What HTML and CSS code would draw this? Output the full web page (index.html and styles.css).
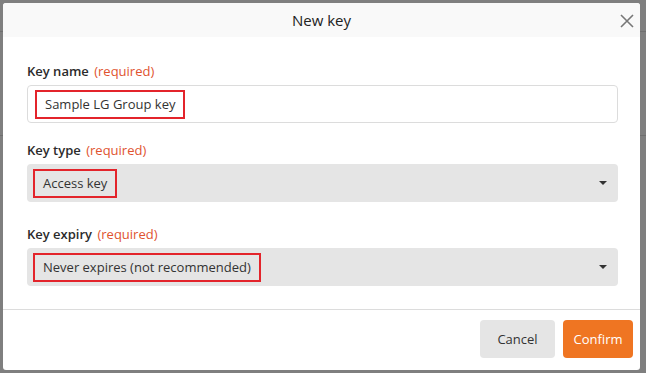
FILE: index.html
```html
<!DOCTYPE html>
<html lang="en">
<head>
  <meta charset="UTF-8">
  <title>New key</title>
  <link rel="stylesheet" href="styles.css">
</head>
<body>
  <div class="dialog">
    <!-- Header -->
    <div class="dialog-header">
      <div class="dialog-title">New key</div>
      <button class="close-btn" aria-label="Close">
        <svg width="14" height="14" viewBox="0 0 14 14">
          <path d="M1 1 L13 13 M13 1 L1 13" stroke="#777" stroke-width="1.6" fill="none"/>
        </svg>
      </button>
    </div>

    <!-- Form -->
    <div class="dialog-body">
      <div class="field field-name">
        <div class="label">Key name <span class="req">(required)</span></div>
        <div class="text-input">
          <span class="mark">Sample LG Group key</span>
        </div>
      </div>

      <div class="field field-type">
        <div class="label">Key type <span class="req">(required)</span></div>
        <div class="select">
          <span class="mark">Access key</span>
          <span class="caret"></span>
        </div>
      </div>

      <div class="field">
        <div class="label">Key expiry <span class="req">(required)</span></div>
        <div class="select">
          <span class="mark">Never expires (not recommended)</span>
          <span class="caret"></span>
        </div>
      </div>
    </div>

    <!-- Footer -->
    <div class="dialog-footer">
      <button class="btn btn-cancel">Cancel</button>
      <button class="btn btn-confirm">Confirm</button>
    </div>
  </div>
</body>
</html>
```

FILE: styles.css
```css
body {
  margin: 0;
  padding: 3px;
  width: 646px;
  height: 373px;
  box-sizing: border-box;
  font-family: "Open Sans", Arial, sans-serif;
  font-size: 13px;
  color: #333;
  background: #7f7f7f;
  background-image:
    linear-gradient(#6f6f6f, #6f6f6f),
    linear-gradient(#6f6f6f, #6f6f6f);
  background-size: 100% 1px, 100% 1px;
  background-position: 0 31px, 0 135px;
  background-repeat: no-repeat;
  overflow: hidden;
}

.dialog {
  width: 637px;
  height: 367px;
  background: #fff;
  border-radius: 3px;
  display: flex;
  flex-direction: column;
  overflow: hidden;
}

.dialog-header {
  height: 34px;
  background: #f9f9f9;
  display: flex;
  align-items: center;
  justify-content: center;
  position: relative;
}

.dialog-title {
  font-size: 15px;
  color: #222;
}

.close-btn {
  position: absolute;
  right: 5px;
  top: 10px;
  width: 16px;
  height: 16px;
  padding: 0;
  border: none;
  background: none;
  display: flex;
  align-items: center;
  justify-content: center;
}

.dialog-body {
  padding: 25px 22px 23px 24px;
  border-bottom: 1px solid #dcdcdc;
}

.field-name { margin-bottom: 18px; }
.field-type { margin-bottom: 23px; }

.label {
  font-weight: 600;
  line-height: 18px;
  margin-bottom: 5px;
  color: #2b2b2b;
}

.req {
  font-weight: 400;
  color: #e0532f;
  margin-left: 2px;
}

.text-input,
.select {
  height: 38px;
  box-sizing: border-box;
  border-radius: 4px;
  display: flex;
  align-items: center;
  padding-left: 6px;
  position: relative;
}

.text-input {
  border: 1px solid #dcdcdc;
  background: #fff;
  padding-left: 7px;
}

.select {
  background: #e5e5e5;
}

/* red highlight boxes */
.mark {
  border: 2px solid #e3242b;
  padding: 0 8px;
  line-height: 25px;
  color: #333;
}

.caret {
  position: absolute;
  right: 11px;
  top: 17px;
  width: 0;
  height: 0;
  border-left: 4px solid transparent;
  border-right: 4px solid transparent;
  border-top: 4px solid #333;
}

.dialog-footer {
  display: flex;
  justify-content: flex-end;
  gap: 8px;
  padding: 10px 7px 0 0;
}

.btn {
  height: 38px;
  border: none;
  border-radius: 4px;
  font-family: "Open Sans", Arial, sans-serif;
  font-size: 13px;
  cursor: pointer;
}

.btn-cancel {
  width: 75px;
  background: #e5e5e5;
  color: #333;
}

.btn-confirm {
  width: 70px;
  background: #ef7522;
  color: #fff;
}
```
